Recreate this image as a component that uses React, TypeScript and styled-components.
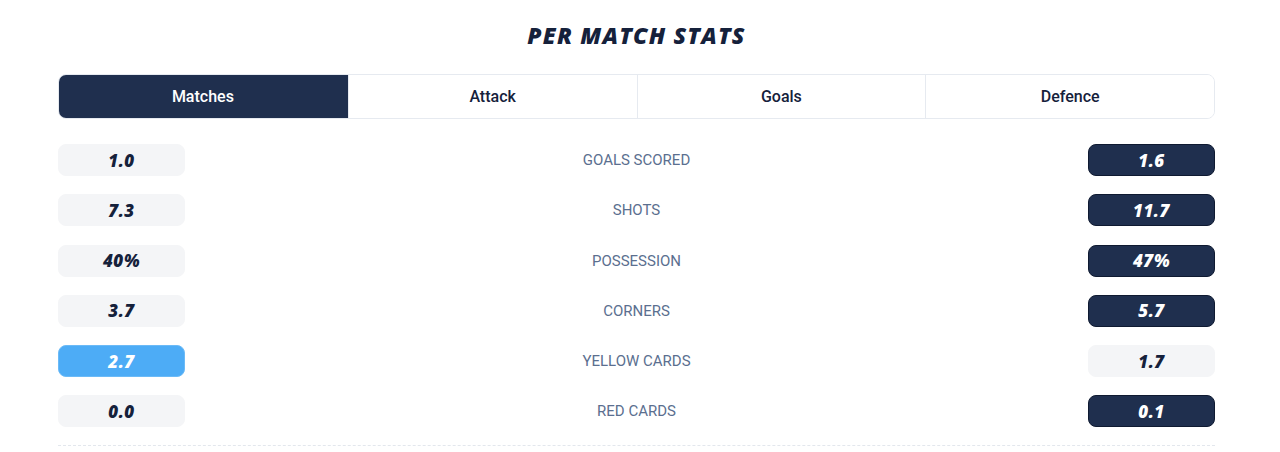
import styled, { createGlobalStyle } from "styled-components";

const GlobalStyle = createGlobalStyle`
  body {
    margin: 0;
    background: #ffffff;
    font-family: Roboto, "Liberation Sans", sans-serif;
  }
`;

type Tone = "light" | "dark" | "blue";

interface IStat {
  label: string;
  home: string;
  away: string;
  homeTone: Tone;
  awayTone: Tone;
}

const tabs = ["Matches", "Attack", "Goals", "Defence"];

const stats: IStat[] = [
  { label: "GOALS SCORED", home: "1.0", away: "1.6", homeTone: "light", awayTone: "dark" },
  { label: "SHOTS", home: "7.3", away: "11.7", homeTone: "light", awayTone: "dark" },
  { label: "POSSESSION", home: "40%", away: "47%", homeTone: "light", awayTone: "dark" },
  { label: "CORNERS", home: "3.7", away: "5.7", homeTone: "light", awayTone: "dark" },
  { label: "YELLOW CARDS", home: "2.7", away: "1.7", homeTone: "blue", awayTone: "light" },
  { label: "RED CARDS", home: "0.0", away: "0.1", homeTone: "light", awayTone: "dark" },
];

function App() {
  return (
    <>
      <GlobalStyle />
      <Container>
        <Title>PER MATCH STATS</Title>
        <TabBar>
          {tabs.map((tab, i) => (
            <Tab key={tab} active={i === 0}>
              {tab}
            </Tab>
          ))}
        </TabBar>
        <StatList>
          {stats.map((s) => (
            <StatRow key={s.label}>
              <Pill tone={s.homeTone}>{s.home}</Pill>
              <Label>{s.label}</Label>
              <Pill tone={s.awayTone}>{s.away}</Pill>
            </StatRow>
          ))}
        </StatList>
        <Divider />
      </Container>
    </>
  );
}

const Container = styled.div`
  width: 1157px;
  margin-left: 58px;
  padding-top: 21px;
`;

const Title = styled.h2`
  margin: 0;
  text-align: center;
  font-family: "Open Sans", "Liberation Sans", sans-serif;
  font-style: italic;
  font-weight: 800;
  font-size: 23px;
  line-height: 28px;
  letter-spacing: 1.2px;
  color: #15213b;
`;

const TabBar = styled.div`
  display: grid;
  grid-template-columns: repeat(4, 1fr);
  margin-top: 25px;
  height: 45px;
  border: 1px solid #e6eaf0;
  border-radius: 8px;
  overflow: hidden;
  box-sizing: border-box;
`;

const Tab = styled.div<{ active: boolean }>`
  display: flex;
  align-items: center;
  justify-content: center;
  font-size: 16px;
  font-weight: 500;
  color: ${(p) => (p.active ? "#ffffff" : "#15213b")};
  background: ${(p) => (p.active ? "#1f2f4e" : "#ffffff")};
  border-left: 1px solid #e6eaf0;
  margin: ${(p) => (p.active ? "-1px 0 -1px -1px" : "0")};
  &:first-child {
    border-left: none;
  }
`;

const StatList = styled.div`
  display: flex;
  flex-direction: column;
  gap: 18.25px;
  margin-top: 25px;
`;

const StatRow = styled.div`
  display: grid;
  grid-template-columns: 127px 1fr 127px;
  align-items: center;
`;

const pillColors: Record<Tone, { bg: string; fg: string; border: string }> = {
  light: { bg: "#f4f5f7", fg: "#15213b", border: "#f4f5f7" },
  dark: { bg: "#1f2f4e", fg: "#ffffff", border: "#0f1a31" },
  blue: { bg: "#4dacf6", fg: "#ffffff", border: "#6bbaf7" },
};

const Pill = styled.div<{ tone: Tone }>`
  height: 32px;
  box-sizing: border-box;
  display: flex;
  align-items: center;
  justify-content: center;
  border-radius: 8px;
  border: 1px solid ${(p) => pillColors[p.tone].border};
  background: ${(p) => pillColors[p.tone].bg};
  color: ${(p) => pillColors[p.tone].fg};
  font-family: "Open Sans", "Liberation Sans", sans-serif;
  font-style: italic;
  font-weight: 800;
  font-size: 17px;
  letter-spacing: 0.5px;
`;

const Label = styled.div`
  text-align: center;
  font-size: 15px;
  color: #5b6f8f;
`;

const Divider = styled.div`
  margin-top: 18px;
  border-top: 1px dashed #e3e7ed;
`;

export default App;
